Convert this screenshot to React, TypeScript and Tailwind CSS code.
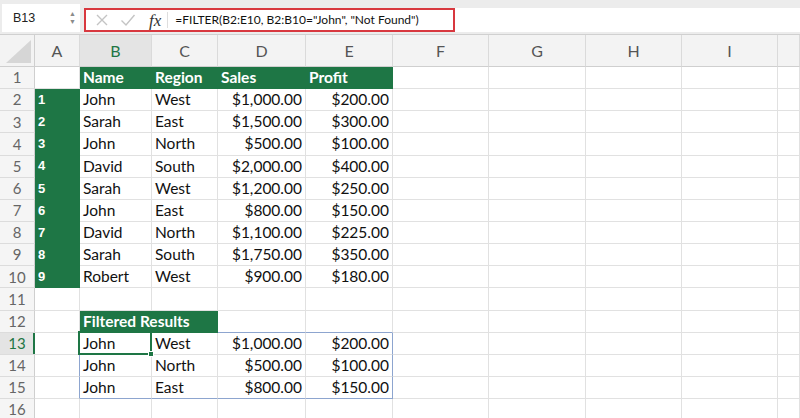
import React from 'react';

const GREEN = '#1e7645';

type Row = { a?: string; b?: string; c?: string; d?: string; e?: string };

const rows: Row[] = [
  { b: 'Name', c: 'Region', d: 'Sales', e: 'Profit' },
  { a: '1', b: 'John', c: 'West', d: '$1,000.00', e: '$200.00' },
  { a: '2', b: 'Sarah', c: 'East', d: '$1,500.00', e: '$300.00' },
  { a: '3', b: 'John', c: 'North', d: '$500.00', e: '$100.00' },
  { a: '4', b: 'David', c: 'South', d: '$2,000.00', e: '$400.00' },
  { a: '5', b: 'Sarah', c: 'West', d: '$1,200.00', e: '$250.00' },
  { a: '6', b: 'John', c: 'East', d: '$800.00', e: '$150.00' },
  { a: '7', b: 'David', c: 'North', d: '$1,100.00', e: '$225.00' },
  { a: '8', b: 'Sarah', c: 'South', d: '$1,750.00', e: '$350.00' },
  { a: '9', b: 'Robert', c: 'West', d: '$900.00', e: '$180.00' },
  {},
  { b: 'Filtered Results' },
  { b: 'John', c: 'West', d: '$1,000.00', e: '$200.00' },
  { b: 'John', c: 'North', d: '$500.00', e: '$100.00' },
  { b: 'John', c: 'East', d: '$800.00', e: '$150.00' },
  {},
];

const cols = ['A', 'B', 'C', 'D', 'E', 'F', 'G', 'H', 'I', ''];

const IconX = () => (
  <svg width="14" height="14" viewBox="0 0 14 14" fill="none">
    <path d="M2 2L12 12M12 2L2 12" stroke="#c4c4c4" strokeWidth="1.4" />
  </svg>
);

const IconCheck = () => (
  <svg width="16" height="14" viewBox="0 0 16 14" fill="none">
    <path d="M1.5 7.5L6 12L14.5 2" stroke="#c4c4c4" strokeWidth="1.4" />
  </svg>
);

function cellClass(r: number, c: number) {
  // r: row number, c: 0 = column A
  const green =
    (r === 1 && c >= 1 && c <= 4) ||
    (c === 0 && r >= 2 && r <= 10) ||
    (r === 12 && (c === 1 || c === 2));
  const inRange = r >= 13 && r <= 15;
  let right = 'border-r-[#e1e1e1]';
  let bottom = 'border-b-[#e1e1e1]';
  if (green) {
    right = 'border-r-[#1e7645]';
    bottom = 'border-b-[#1e7645]';
  }
  if (inRange && (c === 0 || c === 4)) right = 'border-r-[#8da5cf]';
  if ((r === 12 && (c === 3 || c === 4)) || (r === 15 && c >= 1 && c <= 4)) bottom = 'border-b-[#8da5cf]';
  return { green, cls: `${right} ${bottom}` };
}

export default function App() {
  return (
    <div className="w-[800px] h-[418px] overflow-hidden bg-white font-['Lato',sans-serif]">
      {/* formula bar */}
      <div className="h-[35px] bg-[#ececec] border-b border-[#d0d0d0] flex items-start pt-[4px] pl-[2px]">
        <div className="w-[78px] h-[28px] bg-white flex items-center justify-between pl-[11px] pr-[4px] font-['Liberation_Sans',sans-serif] text-[12.5px] text-[#222]">
          <span>B13</span>
          <span className="flex flex-col items-center text-[#8a8a8a] text-[7px] leading-[8px]">
            <span>▲</span>
            <span>▼</span>
          </span>
        </div>
        <div className="ml-[4px] mt-[4px] flex-1 h-[24px] bg-white flex">
          <div className="w-[371px] h-[24px] border-2 border-[#d8383f] flex items-center">
            <span className="ml-[9px]"><IconX /></span>
            <span className="ml-[11px]"><IconCheck /></span>
            <span className="ml-[13px] font-['Liberation_Serif',serif] italic text-[17px] text-[#333] leading-none">fx</span>
            <span className="ml-[6px] w-px h-[16px] bg-[#dedede]" />
            <span className="ml-[7px] text-[12px] text-[#111] whitespace-nowrap">
              =FILTER(B2:E10, B2:B10="John", "Not Found")
            </span>
          </div>
        </div>
      </div>

      {/* sheet */}
      <div className="grid grid-cols-[35px_45px_72px_66px_88px_87px_96px_97px_96px_96px_22px] auto-rows-[22.15px] grid-rows-[32px]">
        <div className="h-[32px] bg-[#f3f3f3] border-r border-b border-[#cfcfcf] flex items-end justify-end p-[3px]">
          <svg width="25" height="23" viewBox="0 0 25 23">
            <path d="M25 0V23H0Z" fill="#d6d6d6" />
          </svg>
        </div>
        {cols.map((c, i) => (
          <div
            key={'h' + i}
            className={`h-[32px] border-r border-b border-r-[#dadada] border-b-[#cfcfcf] flex items-center justify-center text-[16px] ${
              c === 'B' ? 'bg-[#e4e4e4] text-[#1e7645]' : 'bg-[#f3f3f3] text-[#555]'
            }`}
          >
            {c}
          </div>
        ))}

        {rows.map((row, ri) => {
          const r = ri + 1;
          const vals = [row.a, row.b, row.c, row.d, row.e, '', '', '', '', ''];
          return (
            <React.Fragment key={r}>
              <div
                className={`relative border-r border-b border-r-[#cfcfcf] border-b-[#dcdcdc] flex items-center justify-center text-[15px] ${
                  r === 13 ? 'bg-[#e4e4e4] text-[#1e7645]' : 'bg-[#f5f5f5] text-[#666]'
                }`}
              >
                {r}
                {r === 13 && <span className="absolute right-[-1px] top-0 bottom-0 w-[2px] bg-[#1e7645]" />}
              </div>
              {vals.map((v, c) => {
                const { green, cls } = cellClass(r, c);
                const right = c === 3 || c === 4;
                const header = r === 1 || r === 12;
                return (
                  <div
                    key={c}
                    className={`relative border-r border-b ${cls} flex items-center whitespace-nowrap ${
                      green ? 'text-white' : 'bg-white text-[#111]'
                    } ${right && !header ? 'justify-end pr-[3px]' : 'pl-[3px]'} ${
                      c === 0 ? "font-['Liberation_Sans',sans-serif] font-bold text-[13px]" : header ? 'font-bold text-[15.5px]' : 'text-[15.5px]'
                    }`}
                    style={green ? { backgroundColor: GREEN } : undefined}
                  >
                    <span className="relative z-10">{v}</span>
                    {r === 13 && c === 1 && (
                      <span className="absolute left-[-2px] top-[-2px] right-[-1px] bottom-[-1px] border-2 border-[#1e7645] z-20">
                        <span className="absolute right-[-4px] bottom-[-4px] w-[6px] h-[6px] bg-[#1e7645] border border-white" />
                      </span>
                    )}
                  </div>
                );
              })}
            </React.Fragment>
          );
        })}
      </div>
    </div>
  );
}
